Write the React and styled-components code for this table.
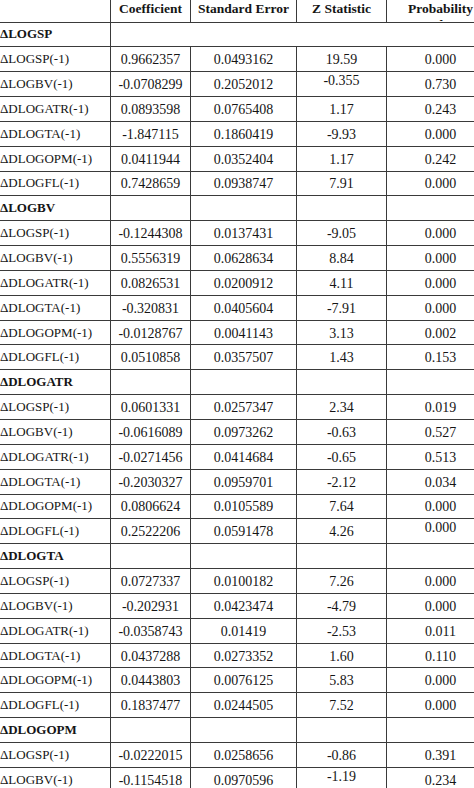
import React from "react";
import styled, { createGlobalStyle } from "styled-components";

const Global = createGlobalStyle`
  html, body { margin: 0; padding: 0; background: #fff; }
  body { font-family: "Liberation Serif", "DejaVu Serif", serif; color: #151515; }
`;

const Page = styled.div`
  width: 474px;
  height: 788px;
  overflow: hidden;
  background: #fff;
`;

const Table = styled.table`
  border-collapse: collapse;
  table-layout: fixed;
  width: 500px;
  margin-left: -6px;
`;

const HeadRow = styled.tr`
  height: 22px;
`;

const HeadCell = styled.th`
  padding: 0;
  border: 1px solid #3a3a3a;
  border-top: none;
  vertical-align: top;
  font-weight: bold;
  font-size: 13.5px;
  text-align: center;
`;

const HeadClip = styled.div`
  height: 21px;
  overflow: hidden;
  line-height: 16px;
  padding-top: 1px;
  box-sizing: border-box;
`;

const Row = styled.tr`
  height: 24.85px;
`;

const LabelCell = styled.td`
  padding: 0 0 0 5px;
  border: 1px solid #3a3a3a;
  font-size: 13px;
  font-weight: ${(p) => (p.$section ? "bold" : "normal")};
  text-align: left;
  white-space: nowrap;
  vertical-align: middle;
  line-height: 16px;
`;

const NumCell = styled.td`
  padding: ${(p) => (p.$raised ? "1px 0 0 0" : "2px 0 0 0")};
  border: 1px solid #3a3a3a;
  font-size: 14px;
  text-align: center;
  white-space: nowrap;
  vertical-align: ${(p) => (p.$raised ? "top" : "middle")};
  line-height: 16px;
`;

const sections = [
  {
    name: "ΔLOGSP",
    merged: true,
    rows: [
      ["ΔLOGSP(-1)", "0.9662357", "0.0493162", "19.59", "0.000"],
      ["ΔLOGBV(-1)", "-0.0708299", "0.2052012", "^-0.355", "0.730"],
      ["ΔDLOGATR(-1)", "0.0893598", "0.0765408", "1.17", "0.243"],
      ["ΔDLOGTA(-1)", "-1.847115", "0.1860419", "-9.93", "0.000"],
      ["ΔDLOGOPM(-1)", "0.0411944", "0.0352404", "1.17", "0.242"],
      ["ΔDLOGFL(-1)", "0.7428659", "0.0938747", "7.91", "0.000"],
    ],
  },
  {
    name: "ΔLOGBV",
    rows: [
      ["ΔLOGSP(-1)", "-0.1244308", "0.0137431", "-9.05", "0.000"],
      ["ΔLOGBV(-1)", "0.5556319", "0.0628634", "8.84", "0.000"],
      ["ΔDLOGATR(-1)", "0.0826531", "0.0200912", "4.11", "0.000"],
      ["ΔDLOGTA(-1)", "-0.320831", "0.0405604", "-7.91", "0.000"],
      ["ΔDLOGOPM(-1)", "-0.0128767", "0.0041143", "3.13", "0.002"],
      ["ΔDLOGFL(-1)", "0.0510858", "0.0357507", "1.43", "0.153"],
    ],
  },
  {
    name: "ΔDLOGATR",
    rows: [
      ["ΔLOGSP(-1)", "0.0601331", "0.0257347", "2.34", "0.019"],
      ["ΔLOGBV(-1)", "-0.0616089", "0.0973262", "-0.63", "0.527"],
      ["ΔDLOGATR(-1)", "-0.0271456", "0.0414684", "-0.65", "0.513"],
      ["ΔDLOGTA(-1)", "-0.2030327", "0.0959701", "-2.12", "0.034"],
      ["ΔDLOGOPM(-1)", "0.0806624", "0.0105589", "7.64", "0.000"],
      ["ΔDLOGFL(-1)", "0.2522206", "0.0591478", "4.26", "^0.000"],
    ],
  },
  {
    name: "ΔDLOGTA",
    rows: [
      ["ΔLOGSP(-1)", "0.0727337", "0.0100182", "7.26", "0.000"],
      ["ΔLOGBV(-1)", "-0.202931", "0.0423474", "-4.79", "0.000"],
      ["ΔDLOGATR(-1)", "-0.0358743", "0.01419", "-2.53", "0.011"],
      ["ΔDLOGTA(-1)", "0.0437288", "0.0273352", "1.60", "0.110"],
      ["ΔDLOGOPM(-1)", "0.0443803", "0.0076125", "5.83", "0.000"],
      ["ΔDLOGFL(-1)", "0.1837477", "0.0244505", "7.52", "0.000"],
    ],
  },
  {
    name: "ΔDLOGOPM",
    rows: [
      ["ΔLOGSP(-1)", "-0.0222015", "0.0258656", "-0.86", "0.391"],
      ["ΔLOGBV(-1)", "-0.1154518", "0.0970596", "^-1.19", "0.234"],
    ],
  },
];

function Value({ v }) {
  const raised = v.startsWith("^");
  return <NumCell $raised={raised}>{raised ? v.slice(1) : v}</NumCell>;
}

export default function App() {
  return (
    <Page>
      <Global />
      <Table>
        <colgroup>
          <col style={{ width: 116 }} />
          <col style={{ width: 80 }} />
          <col style={{ width: 106 }} />
          <col style={{ width: 90 }} />
          <col style={{ width: 108 }} />
        </colgroup>
        <thead>
          <HeadRow>
            <HeadCell><HeadClip /></HeadCell>
            <HeadCell><HeadClip>Coefficient</HeadClip></HeadCell>
            <HeadCell><HeadClip>Standard Error</HeadClip></HeadCell>
            <HeadCell><HeadClip>Z Statistic</HeadClip></HeadCell>
            <HeadCell>
              <HeadClip>
                Probability
                <br />
                Value
              </HeadClip>
            </HeadCell>
          </HeadRow>
        </thead>
        <tbody>
          {sections.map((s) => (
            <React.Fragment key={s.name}>
              <Row>
                <LabelCell $section>{s.name}</LabelCell>
                {s.merged ? (
                  <NumCell colSpan={4} />
                ) : (
                  <>
                    <NumCell />
                    <NumCell />
                    <NumCell />
                    <NumCell />
                  </>
                )}
              </Row>
              {s.rows.map((r, i) => (
                <Row key={s.name + i}>
                  <LabelCell>{r[0]}</LabelCell>
                  {r.slice(1).map((v, j) => (
                    <Value key={j} v={v} />
                  ))}
                </Row>
              ))}
            </React.Fragment>
          ))}
        </tbody>
      </Table>
    </Page>
  );
}
